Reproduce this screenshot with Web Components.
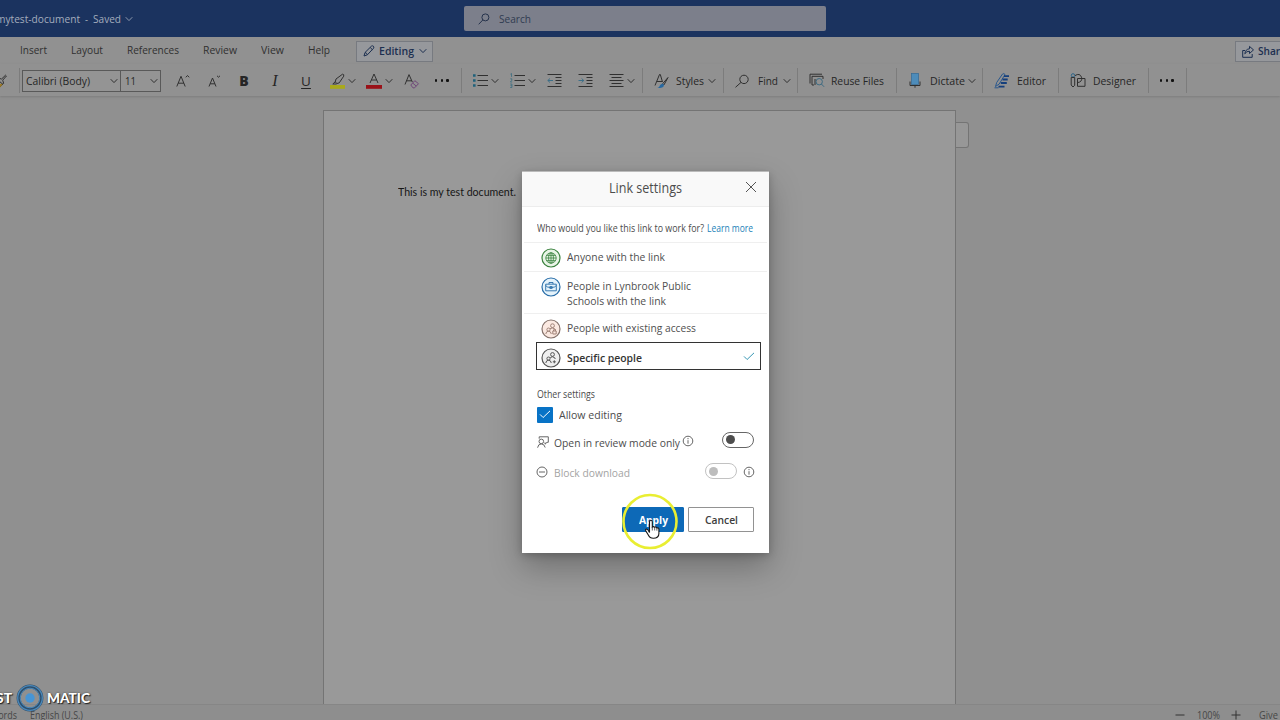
<!DOCTYPE html>
<html lang="en">
<head>
<meta charset="utf-8">
<title>mytest-document</title>
<style>
  html, body { margin: 0; height: 720px; overflow: hidden; }
  body { font-family: "Open Sans", "Noto Sans", sans-serif; background: #909090; }
</style>
</head>
<body>
<word-app></word-app>

<script>
// Stroke icons, drawn on the grid given by the first two values
const ICONS = {
  chevron: [8, 6, '<path d="M.7 1.2 4 4.6 7.3 1.2"/>'],
  search: [16, 14, '<circle cx="10" cy="5.4" r="4.2"/><path d="M7 8.4 1.5 13.3"/>'],
  lookup: [12, 12, '<circle cx="7.4" cy="4.4" r="3.5"/><path d="M4.9 6.9.7 11.3"/>'],
  pencil: [12, 12, '<path d="M1 11 2 7.5 8.4 1.2q1.2-.8 2 0t.2 2L4.4 9.8ZM2 7.5q1.8.4 2.4 2.3M7.2 2.5l2.2 2.2"/>'],
  share: [12, 13, '<path d="M3 5.5H.7v6.8h9.5V9M2.8 8.8Q3.5 4 7.5 3.8V1.4l4 3.5-4 3.6V6.2Q4.6 6 2.8 8.8Z"/>'],
  brush: [14, 14, '<path d="M12.5 1.2 8.6 5 5.5 4.2 2 8l5 5 3.6-3.8-.9-3L13.4 2Z"/><path d="M6 9.500 2.500 12 7 13.500 10 10Z" fill="#9c7a28" stroke="none"/><path d="m5 6 5 4.500"/>'],
  grow: [14, 14, '<path d="M.8 12.5 5 2.3l4.2 10.2M2.2 9.2h5.6M9.8 3.3 11.5 1.5 13.2 3.3"/>'],
  shrink: [13, 14, '<path d="M1 12.5 4.500 4l3.500 8.500M2.200 9.800h4.600M9 1.800l1.500 1.400L12 1.800"/>'],
  marker: [16, 16, '<path d="M0 12h15v3.8H0Z" fill="#a9a91b" stroke="none"/><path d="M12.5 1.2 6 6l-.8 3L7 10.5l2.2-.6 4.5-6.7q.6-2-1.2-2ZM5.4 8.6 2.8 11h3.8"/>'],
  fontcolor: [16, 16, '<path d="M0 12h16v3.8H0Z" fill="#9a1118" stroke="none"/><path d="M4 10 8 1l4 9M5.3 7h5.4"/>'],
  clear: [16, 16, '<path d="M1 11.500 5 1.600 8.300 9M2.500 7.800h5"/><path d="m6.800 12 4-4.300 3.700 3-4 4.200H9Zm1.800-2 3.600 3" stroke="#704879"/>'],
  bullets: [15, 15, '<path d="M4.5 2.5H15M4.5 7.5H15M4.5 12.5H15"/><path d="M0 1.2h2.6v2.6H0zM0 6.2h2.6v2.6H0zM0 11.2h2.6v2.6H0z" fill="#1f617b" stroke="none"/>'],
  numbers: [15, 15, '<path d="M4.500 2.500H15M4.500 7.500H15M4.500 12.500H15"/><path d="M.4 1.200 1.500.5v3.400M.3 5.800h1.500v1.500L.4 9h1.800M.2 11h1.700v3.500H.2M.5 12.600h1.200" stroke="#376c80" stroke-width=".8"/>'],
  outdent: [15, 15, '<path d="M.5 1.500h14M8.500 4.500h6M8.500 7.500h6M8.500 10.500h6M.5 13.500h14"/><path d="M6 7.500H.8m2.200-2-2.200 2 2.200 2" stroke="#3d6f88"/>'],
  indent: [15, 15, '<path d="M.5 1.500h14M8.500 4.500h6M8.500 7.500h6M8.500 10.500h6M.5 13.500h14"/><path d="M.5 7.500h5.300m-2.200-2 2.200 2-2.200 2" stroke="#3d6f88"/>'],
  align: [15, 15, '<path d="M.5 1.500h14M2.500 4.500h10M.5 7.500h14M2.500 10.500h10M.5 13.500h14"/>'],
  styles: [16, 16, '<path d="M1 12.500 5.500 1.500h.8L8.500 9M3 8.500h5M14 4.500 8.800 10.500 10 11.800Z"/><path d="M9 10.800q1.800 1 .4 3-1 1.600-5.900 1 2-.8 2.400-2.400 1-2 3.100-1.600Z" fill="#2768a0" stroke="none"/>'],
  reuse: [16, 15, '<path d="M5 12H3V3.300h11V6M1 10.500V1.200h12"/><path d="M6 6v6"/><circle cx="10.200" cy="8.700" r="3.200" stroke="#3e6b82"/><path d="m12.400 11 2.700 2.800" stroke="#3e6b82"/>'],
  mic: [12, 15, '<path d="M1 8.500v4h10v-4M6 12.500v2.200"/><rect x="2.500" y=".5" width="7" height="11" fill="#4d8cba" stroke="#336a96" stroke-width=".7"/>'],
  editor: [16, 16, '<path d="m1.500 13.500 1.200-4L8.500 1q1.500-1 2.500.5L5.200 11ZM.5 14.800h4" stroke="#28578e"/><path d="M10 3.200h5M8.500 6.500h5.200M6.800 10h6M4.500 13.700h6" stroke="#153f7c" stroke-width="1.800"/>'],
  designer: [16, 15, '<circle cx="3" cy="2.400" r="1.700" stroke="#2c6489"/><path d="M1.200 4.500h3.500v7.800L3 14 1.200 12Z"/><path d="M5 2.600q4.800-3 6.500 1.600 1.300 4.700-4.200 5.500"/><path d="M7.500 5.500H15v7.800H7.500Z"/>'],
  close: [12, 12, '<path d="m1 1 10 10M11 1 1 11"/>'],
  check: [12, 9, '<path d="m1 4.400 3.100 3.100L11 .9"/>'],
  info: [12, 12, '<circle cx="6" cy="6" r="4.800"/><path d="M6 5.200v3.500M6 3v1.200"/>'],
  block: [12, 12, '<circle cx="6" cy="6" r="5"/><path d="M3 6h6"/>'],
  review: [12, 12, '<circle cx="4.300" cy="5.400" r="2.300"/><path d="M.6 11.700q.5-3.700 3.700-3.800 3 0 3.900 3.600M2.200 2.700V.8h9.100v5.500H10l-2 1.900V6.400"/>'],
  globe: [20, 20, '<circle cx="10" cy="10" r="9" fill="#e9f5e7" stroke-width="1.200"/><g stroke-width=".8"><circle cx="10" cy="10" r="5.200"/><ellipse cx="10" cy="10" rx="2.400" ry="5.200"/><path d="M10 4.800v10.400M4.800 10h10.400M5.600 7.400h8.800M5.600 12.600h8.800"/></g>'],
  briefcase: [20, 20, '<circle cx="10" cy="10" r="9" fill="#e5f3fb" stroke-width="1.200"/><path d="M4.700 7.200h10.600v6.600H4.700ZM8 7V5.500h4V7M4.700 8.500Q6 10.400 8.500 10.400h3q2.500 0 3.800-1.900M8.800 9.600h2.400v1.800H8.800Z" stroke-width=".9"/>'],
  existing: [20, 20, '<circle cx="10" cy="10" r="9" fill="#fbe9e1" stroke="#86736c" stroke-width="1.200"/><circle cx="11.500" cy="6.700" r="1.900"/><circle cx="7.500" cy="10.600" r="1.600"/><path d="M4.800 15q.3-2.800 2.700-2.800t2.800 2.800M9 9.800q2-1.800 5 .2l.4 1M11.800 12h3.400v3h-3.400Zm.7 0v-1.200h2V12"/>'],
  specific: [20, 20, '<circle cx="10" cy="10" r="9" fill="#efefef" stroke-width="1.200"/><circle cx="11.500" cy="6.500" r="1.900"/><circle cx="7.500" cy="10.600" r="1.600"/><path d="M4.800 15q.3-2.800 2.700-2.800t2.800 2.800M9.300 9.600q2-1.800 4.500.2l.4 1.200M13.300 12.300v3M11.800 13.800h3"/>'],
  minus: [10, 10, '<path d="M.5 5h9"/>'],
  plus: [10, 10, '<path d="M.5 5h9M5 .5v9"/>'],
};

class UiIcon extends HTMLElement {
  connectedCallback() {
    const [w, h, body] = ICONS[this.getAttribute('name')];
    this.attachShadow({mode: 'open'}).innerHTML = `
      <style>
        :host { display: block; flex: none; width: ${w}px; height: ${h}px; color: #303030; }
        svg { display: block; overflow: visible; }
      </style>
      <svg width="${w}" height="${h}" viewBox="0 0 ${w} ${h}" fill="none" stroke="currentColor" stroke-width="1">${body}</svg>`;
  }
}
customElements.define('ui-icon', UiIcon);

// One line of text, condensed so that it fills the width in its "w" attribute
class UiText extends HTMLElement {
  connectedCallback() {
    this.attachShadow({mode: 'open'}).innerHTML = `
      <style>
        :host { display: block; flex: none; white-space: nowrap; }
        span { display: inline-block; transform-origin: 0 50%; }
      </style>
      <span><slot></slot></span>`;
    const w = Number(this.getAttribute('w'));
    if (!w) return;
    const span = this.shadowRoot.querySelector('span');
    const natural = span.getBoundingClientRect().width;
    span.style.transform = `scaleX(${w / natural})`;
    this.style.width = w + 'px';
  }
}

class UiDots extends HTMLElement {
  constructor() {
    super();
    this.attachShadow({mode: 'open'}).innerHTML = `
      <style>
        :host { display: flex; flex: none; gap: 3.500px; width: 14px; }
        i { width: 2.200px; height: 2.200px; border-radius: 50%; background: #111; }
      </style><i></i><i></i><i></i>`;
  }
}
customElements.define('ui-dots', UiDots);

class TitleBar extends HTMLElement {
  constructor() {
    super();
    this.attachShadow({mode: 'open'}).innerHTML = `
      <style>
        :host { display: flex; align-items: center; height: 37px; background: #1b335f; color: #a4adbd; font-size: 11.500px; }
        .name { margin-left: -4px; }
        .saved { margin-left: 5px; }
        .down { margin-left: 4px; color: #8c98ad; }
        .search { display: flex; align-items: center; box-sizing: border-box; width: 362px; height: 25px; margin-left: 331px; padding-left: 14px; border-radius: 2px; background: #7c7f8b; color: #303b51; }
        .search ui-icon { color: #26334c; }
        .search ui-text { margin-left: 9px; }
      </style>
      <ui-text class="name" w="84">mytest-document</ui-text>
      <ui-text class="saved" w="3">-</ui-text>
      <ui-text class="saved" w="28">Saved</ui-text>
      <ui-icon class="down" name="chevron"></ui-icon>
      <div class="search"><ui-icon name="lookup"></ui-icon><ui-text w="32">Search</ui-text></div>`;
  }
}

class RibbonTabs extends HTMLElement {
  constructor() {
    super();
    this.attachShadow({mode: 'open'}).innerHTML = `
      <style>
        :host { display: flex; height: 27px; font-size: 11px; line-height: 14px; color: #303030; background: #919191; }
        .tabs { display: flex; flex: none; margin-left: 19.500px; padding-top: 5.500px; }
        .btn { display: flex; flex: none; align-items: center; box-sizing: border-box; height: 21px; margin-top: 3.500px; border: 1px solid #777a80; background: #96989c; color: #1c2f50; font-weight: 600; }
        .btn ui-icon { color: #1c2f50; }
        .editing { width: 77px; margin-left: 26.500px; padding-left: 6px; }
        .editing ui-text { margin: 0 5px 0 4px; }
        .share { width: 60px; margin-left: 802px; padding-left: 6px; gap: 4px; }
      </style>
      <div class="tabs">
        <ui-text w="27">Insert</ui-text>
        <ui-text w="32" style="margin-left:24px">Layout</ui-text>
        <ui-text w="52" style="margin-left:24px">References</ui-text>
        <ui-text w="34" style="margin-left:24px">Review</ui-text>
        <ui-text w="23" style="margin-left:24px">View</ui-text>
        <ui-text w="22" style="margin-left:24px">Help</ui-text>
      </div>
      <div class="btn editing"><ui-icon name="pencil"></ui-icon><ui-text w="35">Editing</ui-text><ui-icon name="chevron"></ui-icon></div>
      <div class="btn share"><ui-icon name="share"></ui-icon><ui-text w="28">Share</ui-text></div>`;
  }
}

// Group of tools that ends in a thin rule
class ToolGroup extends HTMLElement {
  constructor() {
    super();
    this.attachShadow({mode: 'open'}).innerHTML = `
      <style>
        :host { display: flex; flex: none; align-items: center; box-sizing: border-box; height: 25px; border-right: 1px solid #7c7c7c; }
      </style><slot></slot>`;
  }
}
customElements.define('tool-group', ToolGroup);

class RibbonTools extends HTMLElement {
  constructor() {
    super();
    this.attachShadow({mode: 'open'}).innerHTML = `
      <style>
        :host { display: flex; align-items: center; box-sizing: border-box; height: 32px; padding-top: 1px; background: #919191; color: #262626; font-size: 11px; box-shadow: 0 1px 2px #7d7d7d; }
        .font { display: flex; align-items: center; box-sizing: border-box; height: 22px; border: 1px solid #595959; background: #949494; }
        .family { width: 99px; padding-left: 3px; }
        .size { width: 40px; padding-left: 4px; border-left: 0; }
        .b, .i, .u { width: 10px; text-align: center; font-size: 15px; line-height: 20px; }
        .b { font-weight: 800; margin-left: 18px; font-size: 14px; }
        .i { font-family: "Liberation Serif", serif; font-style: italic; margin-left: 21px; font-size: 16px; }
        .u { text-decoration: underline; text-underline-offset: 2px; margin-left: 21px; font-size: 13.500px; }
      </style>
      <tool-group style="width:20px"><ui-icon name="brush" style="margin-left:-7px"></ui-icon></tool-group>
      <tool-group style="width:442px">
        <div class="font family" style="margin-left:2px"><ui-text w="64">Calibri (Body)</ui-text><ui-icon name="chevron" style="margin-left:20px"></ui-icon></div>
        <div class="font size"><ui-text w="11">11</ui-text><ui-icon name="chevron" style="margin-left:14px"></ui-icon></div>
        <ui-icon name="grow" style="margin-left:15px"></ui-icon>
        <ui-icon name="shrink" style="margin-left:18px"></ui-icon>
        <div class="b">B</div><div class="i">I</div><div class="u">U</div>
        <ui-icon name="marker" style="margin-left:19px"></ui-icon>
        <ui-icon name="chevron" style="margin-left:2px"></ui-icon>
        <ui-icon name="fontcolor" style="margin-left:10px"></ui-icon>
        <ui-icon name="chevron" style="margin-left:3px"></ui-icon>
        <ui-icon name="clear" style="margin-left:11px"></ui-icon>
        <ui-dots style="margin-left:15px"></ui-dots>
      </tool-group>
      <tool-group style="width:181px">
        <ui-icon name="bullets" style="margin-left:11px"></ui-icon>
        <ui-icon name="chevron" style="margin-left:3px"></ui-icon>
        <ui-icon name="numbers" style="margin-left:11px"></ui-icon>
        <ui-icon name="chevron" style="margin-left:3px"></ui-icon>
        <ui-icon name="outdent" style="margin-left:11px"></ui-icon>
        <ui-icon name="indent" style="margin-left:16px"></ui-icon>
        <ui-icon name="align" style="margin-left:16px"></ui-icon>
        <ui-icon name="chevron" style="margin-left:3px"></ui-icon>
      </tool-group>
      <tool-group style="width:81px">
        <ui-icon name="styles" style="margin-left:11px"></ui-icon>
        <ui-text w="28" style="margin-left:6px">Styles</ui-text>
        <ui-icon name="chevron" style="margin-left:4px"></ui-icon>
      </tool-group>
      <tool-group style="width:74px">
        <ui-icon name="search" style="margin-left:10px"></ui-icon>
        <ui-text w="20" style="margin-left:8px">Find</ui-text>
        <ui-icon name="chevron" style="margin-left:5px"></ui-icon>
      </tool-group>
      <tool-group style="width:99px">
        <ui-icon name="reuse" style="margin-left:11px"></ui-icon>
        <ui-text w="53" style="margin-left:6px">Reuse Files</ui-text>
      </tool-group>
      <tool-group style="width:86px">
        <ui-icon name="mic" style="margin-left:12px"></ui-icon>
        <ui-text w="35" style="margin-left:9px">Dictate</ui-text>
        <ui-icon name="chevron" style="margin-left:3px"></ui-icon>
      </tool-group>
      <tool-group style="width:76px">
        <ui-icon name="editor" style="margin-left:11px"></ui-icon>
        <ui-text w="29" style="margin-left:7px">Editor</ui-text>
      </tool-group>
      <tool-group style="width:90px">
        <ui-icon name="designer" style="margin-left:11px"></ui-icon>
        <ui-text w="43" style="margin-left:6.500px">Designer</ui-text>
      </tool-group>
      <tool-group style="width:38px"><ui-dots style="margin-left:11px"></ui-dots></tool-group>`;
  }
}

class DocumentArea extends HTMLElement {
  constructor() {
    super();
    this.attachShadow({mode: 'open'}).innerHTML = `
      <style>
        :host { display: flex; align-items: flex-start; box-sizing: border-box; height: 608px; padding: 14px 0 0 323px; background: #909090; }
        .page { flex: none; box-sizing: border-box; width: 632.500px; height: 594px; padding: 73px 0 0 74px; border: 1px solid #747474; border-bottom: 0; background: #999; color: #161616; font: 11px/16px Lato, sans-serif; }
        .note { box-sizing: border-box; width: 13px; height: 26px; margin-top: 12px; border: 1px solid #747474; border-left: 0; border-radius: 0 3px 3px 0; background: #979797; }
      </style>
      <div class="page"><ui-text w="118">This is my test document.</ui-text></div>
      <div class="note"></div>`;
  }
}

class StatusBar extends HTMLElement {
  constructor() {
    super();
    this.attachShadow({mode: 'open'}).innerHTML = `
      <style>
        :host { display: flex; align-items: center; box-sizing: border-box; height: 21px; border-top: 1px solid #868686; background: #8e8e8e; color: #474747; font-size: 10px; }
        ui-icon { color: #333; }
      </style>
      <ui-text w="27" style="margin-left:-10px">Words</ui-text>
      <ui-text w="53" style="margin-left:13px">English (U.S.)</ui-text>
      <ui-icon name="minus" style="margin-left:1092px"></ui-icon>
      <ui-text w="23" style="margin-left:12px">100%</ui-text>
      <ui-icon name="plus" style="margin-left:11px"></ui-icon>
      <ui-text w="19" style="margin-left:18px">Give</ui-text>`;
  }
}

class ScreencastMark extends HTMLElement {
  constructor() {
    super();
    this.attachShadow({mode: 'open'}).innerHTML = `
      <style>
        :host { position: absolute; left: -4px; top: 684px; display: flex; align-items: center; height: 28px; color: #fff; font: 900 13.500px/16px Lato, sans-serif; text-shadow: 1px 1px 1px #222, 0 0 2px #444; }
        svg { display: block; margin: 0 3px 0 4px; }
      </style>
      <ui-text w="16">ST</ui-text>
      <svg width="28" height="28" viewBox="0 0 28 28" fill="none">
        <circle cx="14" cy="14" r="11.400" stroke="#2d4f6d" stroke-width="4"/>
        <circle cx="14" cy="14" r="12.300" stroke="#4b88b9" stroke-width="1.300"/>
        <circle cx="14" cy="14" r="9.800" stroke="#4b88b9" stroke-width="1"/>
        <circle cx="14" cy="14" r="4.700" fill="#4795d5"/>
      </svg>
      <ui-text w="43">MATIC</ui-text>`;
  }
}

class LinkOption extends HTMLElement {
  connectedCallback() {
    this.attachShadow({mode: 'open'}).innerHTML = `
      <style>
        :host { display: flex; align-items: flex-start; box-sizing: border-box; height: 29px; margin: 0 2px; padding: 4.500px 0 0 17px; border-top: 1px solid #efefef; color: #505050; font-size: 11.500px; line-height: 14.500px; }
        :host([tall]) { height: 42px; }
        :host([selected]) { height: 28px; margin: 0 8px 0 14px; padding: 5px 5px 0 4px; border: 1px solid #333; color: #333; font-weight: 600; }
        .label { flex: 1; margin: 2.500px 0 0 5.500px; }
        .tick { margin-top: 4px; color: #3596b4; }
      </style>
      <ui-icon name="${this.getAttribute('icon')}" style="color:${this.getAttribute('tint')}"></ui-icon>
      <div class="label"><slot></slot></div>
      ${this.hasAttribute('selected') ? '<ui-icon class="tick" name="check"></ui-icon>' : ''}`;
  }
}

class UiToggle extends HTMLElement {
  constructor() {
    super();
    this.attachShadow({mode: 'open'}).innerHTML = `
      <style>
        :host { display: flex; flex: none; align-items: center; box-sizing: border-box; width: 32px; height: 16px; padding-left: 3px; border: 1px solid #666; border-radius: 8px; color: #4d4d4d; }
        :host([disabled]) { border-color: #c2c2c2; color: #bdbdbd; }
        i { width: 9px; height: 9px; border-radius: 50%; background: currentColor; }
      </style><i></i>`;
  }
}
customElements.define('ui-toggle', UiToggle);

class LinkSettings extends HTMLElement {
  constructor() {
    super();
    this.attachShadow({mode: 'open'}).innerHTML = `
      <style>
        :host { position: absolute; left: 522px; top: 172px; display: block; width: 247px; height: 381px; background: #fff; color: #4c4c4c; font-size: 11.500px; line-height: 15px; box-shadow: 0 -1px 0 #bbb, 0 14px 30px rgba(0,0,0,.27), 0 2px 8px rgba(0,0,0,.22); }
        header { display: flex; align-items: flex-start; box-sizing: border-box; height: 35px; padding: 6.500px 0 0 87px; border-bottom: 1px solid #ededed; background: #f9f9f9; font-size: 14px; line-height: 18px; }
        header ui-icon { margin: 2.500px 0 0 62.500px; color: #555; }
        .ask { display: flex; gap: 3px; height: 35px; box-sizing: border-box; padding: 14px 0 0 15px; font-size: 10.300px; }
        .ask a { color: #2382b8; }
        h3 { margin: 16.500px 0 5px 15px; font-size: 10.300px; line-height: 15px; font-weight: 400; }
        .row { display: flex; align-items: center; padding: 0 15px; }
        .box { display: flex; align-items: center; justify-content: center; width: 16px; height: 16px; border-radius: 1px; background: #0873c6; }
        .box ui-icon { color: #fff; }
        .edit ui-text { margin-left: 6px; }
        .open { height: 24px; margin-top: 7px; align-items: flex-start; }
        .block { height: 20px; margin-top: 8.500px; color: #a4a4a4; }
        .row > ui-icon { color: #666; }
        footer { display: flex; gap: 4px; margin: 25px 0 0 100px; }
        button { display: flex; justify-content: center; align-items: center; box-sizing: border-box; height: 25px; padding: 0; border: 1px solid #929292; border-radius: 1px; background: #fff; color: #3d3d3d; font: 600 11px/15px "Open Sans", sans-serif; }
        .apply { width: 62px; border-color: #0d69b7; background: #0d69b7; color: #fff; font-weight: 700; }
        .cancel { width: 66px; }
      </style>
      <header><ui-text w="73">Link settings</ui-text><ui-icon name="close"></ui-icon></header>
      <div class="ask"><ui-text w="167">Who would you like this link to work for?</ui-text><a><ui-text w="46">Learn more</ui-text></a></div>
      <link-option icon="globe" tint="#39813d"><ui-text w="98">Anyone with the link</ui-text></link-option>
      <link-option icon="briefcase" tint="#286da8" tall><ui-text w="124">People in Lynbrook Public</ui-text><ui-text w="99">Schools with the link</ui-text></link-option>
      <link-option icon="existing" tint="#a08378"><ui-text w="129">People with existing access</ui-text></link-option>
      <link-option icon="specific" tint="#565656" selected><ui-text w="75">Specific people</ui-text></link-option>
      <h3><ui-text w="58">Other settings</ui-text></h3>
      <div class="row edit"><div class="box"><ui-icon name="check"></ui-icon></div><ui-text w="63">Allow editing</ui-text></div>
      <div class="row open">
        <ui-icon name="review" style="margin-top:6px"></ui-icon>
        <ui-text w="126" style="margin:5px 0 0 5px">Open in review mode only</ui-text>
        <ui-icon name="info" style="margin:5px 0 0 2px"></ui-icon>
        <ui-toggle style="margin:2px 0 0 28px"></ui-toggle>
      </div>
      <div class="row block">
        <ui-icon name="block" style="margin-left:-1px"></ui-icon>
        <ui-text w="76" style="margin-left:6px">Block download</ui-text>
        <ui-toggle disabled style="margin:-2px 0 0 75px"></ui-toggle>
        <ui-icon name="info" style="margin-left:5.500px"></ui-icon>
      </div>
      <footer>
        <button class="apply"><ui-text w="29">Apply</ui-text></button>
        <button class="cancel"><ui-text w="33">Cancel</ui-text></button>
      </footer>`;
  }
}

// Highlight ring of the recorder with the hand pointer in it
class ClickPointer extends HTMLElement {
  constructor() {
    super();
    this.attachShadow({mode: 'open'}).innerHTML = `
      <style>:host { position: absolute; left: 620px; top: 491px; display: block; } svg { display: block; }</style>
      <svg width="60" height="60" viewBox="0 0 60 60" fill="none">
        <circle cx="30" cy="30.500" r="26.500" stroke="#e9ee32" stroke-width="2.600"/>
        <path d="M29.500 41.500V31q0-1.800 1.400-1.800T32.300 31v5q1.200-1 2.400.3 1.300-.8 2.200.6 2-.4 2 1.400v4.200q0 4.700-5.600 4.700-3.600 0-5-3.200l-2.600-4.300q-.5-1.500.8-1.700 1.300 0 3 3.500Z" fill="#fff" stroke="#161616" stroke-width="1.100"/>
        <path d="M32.300 36v3.500M34.700 36.500v3M36.900 37v2.700" stroke="#333" stroke-width=".8"/>
      </svg>`;
  }
}

class WordApp extends HTMLElement {
  constructor() {
    super();
    this.attachShadow({mode: 'open'}).innerHTML = `
      <style>
        :host { display: block; position: relative; width: 1280px; height: 720px; overflow: hidden; }
        ribbon-tools { position: relative; }
      </style>
      <title-bar></title-bar>
      <ribbon-tabs></ribbon-tabs>
      <ribbon-tools></ribbon-tools>
      <document-area></document-area>
      <status-bar></status-bar>
      <screencast-mark></screencast-mark>
      <link-settings></link-settings>
      <click-pointer></click-pointer>`;
  }
}

customElements.define('title-bar', TitleBar);
customElements.define('ribbon-tabs', RibbonTabs);
customElements.define('ribbon-tools', RibbonTools);
customElements.define('document-area', DocumentArea);
customElements.define('status-bar', StatusBar);
customElements.define('screencast-mark', ScreencastMark);
customElements.define('link-option', LinkOption);
customElements.define('link-settings', LinkSettings);
customElements.define('click-pointer', ClickPointer);
customElements.define('word-app', WordApp);
// last, when every text is in the page and can be measured
customElements.define('ui-text', UiText);
</script>
</body>
</html>
